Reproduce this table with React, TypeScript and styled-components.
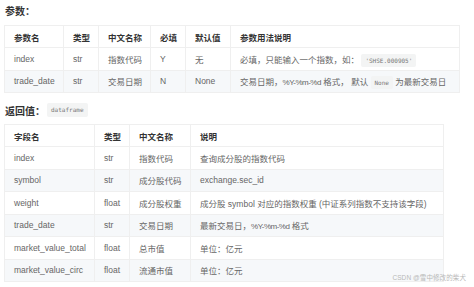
import React from 'react';
import styled, { createGlobalStyle } from 'styled-components';

const GlobalStyle = createGlobalStyle`
  body {
    margin: 0;
    background: #ffffff;
    font-family: "Liberation Sans", "Noto Sans CJK SC", sans-serif;
  }
`;

const Page = styled.div`
  position: relative;
  width: 474px;
  height: 287px;
  padding: 0 4px;
  box-sizing: border-box;
  overflow: hidden;
`;

const Label = styled.div<{ $top: number; $bottom: number }>`
  display: flex;
  align-items: center;
  gap: 2px;
  font-size: 10px;
  font-weight: 700;
  color: #333333;
  padding: ${(p) => p.$top}px 1px 0;
  margin-bottom: ${(p) => p.$bottom}px;
  height: 16px;
`;

const Code = styled.code`
  font-family: "DejaVu Sans Mono", "Liberation Mono", monospace;
  font-size: 6px;
  font-weight: 400;
  color: #777777;
  background: #f3f4f4;
  border-radius: 2px;
  padding: 3px 4px;
  line-height: 8px;
`;

const Fmt = styled.span`
  font-size: 8px;
  letter-spacing: -0.5px;
`;

const Table = styled.table<{ $width: number }>`
  width: ${(p) => p.$width}px;
  border-collapse: collapse;
  table-layout: fixed;
  font-size: 8.5px;
  color: #666666;
`;

const HeadCell = styled.th<{ $w?: number }>`
  width: ${(p) => (p.$w ? `${p.$w}px` : 'auto')};
  height: 22px;
  padding: 0 0 0 9px;
  text-align: left;
  font-weight: 700;
  color: #333333;
  border: 1px solid #efefef;
  box-sizing: border-box;
  white-space: nowrap;
`;

const Row = styled.tr`
  &:nth-child(2n) {
    background: #f6f8fa;
  }
`;

const Cell = styled.td`
  height: 22.5px;
  padding: 0 0 0 9px;
  border: 1px solid #efefef;
  box-sizing: border-box;
  white-space: nowrap;
  overflow: hidden;
`;

const Watermark = styled.div`
  position: absolute;
  right: 8px;
  bottom: 5px;
  font-size: 6.5px;
  color: #b8b8b8;
  letter-spacing: 0.1px;
`;

const params = [
  ['index', 'str', '指数代码', 'Y', '无'],
  ['trade_date', 'str', '交易日期', 'N', 'None'],
];

const fields: [string, string, string, React.ReactNode][] = [
  ['index', 'str', '指数代码', '查询成分股的指数代码'],
  ['symbol', 'str', '成分股代码', 'exchange.sec_id'],
  ['weight', 'float', '成分股权重', '成分股 symbol 对应的指数权重 (中证系列指数不支持该字段)'],
  [
    'trade_date',
    'str',
    '交易日期',
    <>
      最新交易日，<Fmt>%Y-%m-%d</Fmt> 格式
    </>,
  ],
  ['market_value_total', 'float', '总市值', '单位：亿元'],
  ['market_value_circ', 'float', '流通市值', '单位：亿元'],
];

export default function App() {
  return (
    <Page>
      <GlobalStyle />
      <Label $top={2} $bottom={7}>参数：</Label>
      <Table $width={456}>
        <thead>
          <tr>
            <HeadCell $w={59}>参数名</HeadCell>
            <HeadCell $w={35}>类型</HeadCell>
            <HeadCell $w={52}>中文名称</HeadCell>
            <HeadCell $w={35}>必填</HeadCell>
            <HeadCell $w={45}>默认值</HeadCell>
            <HeadCell>参数用法说明</HeadCell>
          </tr>
        </thead>
        <tbody>
          <Row>
            {params[0].map((v, i) => (
              <Cell key={i}>{v}</Cell>
            ))}
            <Cell>
              必填，只能输入一个指数，如： <Code>'SHSE.000905'</Code>
            </Cell>
          </Row>
          <Row>
            {params[1].map((v, i) => (
              <Cell key={i}>{v}</Cell>
            ))}
            <Cell>
              交易日期，<Fmt>%Y-%m-%d</Fmt> 格式， 默认 <Code>None</Code> 为最新交易日
            </Cell>
          </Row>
        </tbody>
      </Table>
      <Label $top={9} $bottom={6}>
        返回值： <Code>dataframe</Code>
      </Label>
      <Table $width={440}>
        <thead>
          <tr>
            <HeadCell $w={90}>字段名</HeadCell>
            <HeadCell $w={35}>类型</HeadCell>
            <HeadCell $w={61}>中文名称</HeadCell>
            <HeadCell>说明</HeadCell>
          </tr>
        </thead>
        <tbody>
          {fields.map((f) => (
            <Row key={f[0]}>
              {f.map((v, i) => (
                <Cell key={i}>{v}</Cell>
              ))}
            </Row>
          ))}
        </tbody>
      </Table>
      <Watermark>CSDN @雪中修改的柴犬</Watermark>
    </Page>
  );
}
